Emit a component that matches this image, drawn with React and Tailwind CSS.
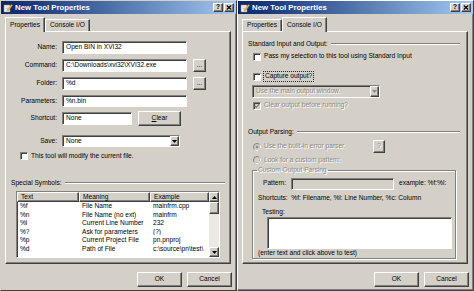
import React from 'react';

const raised =
  'border border-t-white border-l-white border-b-[#404040] border-r-[#404040] bg-[#d4d0c8] shadow-[inset_-1px_-1px_0_#808080]';
const sunken =
  'border border-t-[#808080] border-l-[#808080] border-b-white border-r-white shadow-[inset_1px_1px_0_#404040]';
const greyed = 'text-[#8d8a83] [text-shadow:1px_1px_0_#fff]';

// little notepad + pencil in the caption
const TitleIcon = () => (
  <svg width="10" height="10" viewBox="0 0 10 10" className="shrink-0">
    <rect x="1" y="2" width="6" height="7" fill="#fff" stroke="#7a7a7a" strokeWidth="0.6" />
    <path d="M2.3 4h3.4M2.3 5.5h3.4M2.3 7h2.2" stroke="#9a9a9a" strokeWidth="0.5" />
    <path d="M4 7.2 L8.4 1.4 L9.6 2.4 L5.1 8.1 Z" fill="#f3c22e" stroke="#9c7415" strokeWidth="0.4" />
  </svg>
);

const CaptionButton = ({ children }) => (
  <div className={`w-[10px] h-[9px] flex items-center justify-center ${raised}`}>{children}</div>
);

const TitleBar = () => (
  <div className="flex items-center h-[13px] bg-linear-to-r from-[#0a246a] to-[#a6caf0] px-[2px]">
    <TitleIcon />
    <span className="ml-[2px] text-white font-bold text-[7.8px] leading-none">New Tool Properties</span>
    <div className="ml-auto flex gap-[1px]">
      <CaptionButton>
        <span className="text-[6.5px] font-bold leading-none text-black">?</span>
      </CaptionButton>
      <CaptionButton>
        <svg width="6" height="5" viewBox="0 0 6 5">
          <path d="M0.8 0.5 L5.2 4.5 M5.2 0.5 L0.8 4.5" stroke="#000" strokeWidth="1.1" />
        </svg>
      </CaptionButton>
    </div>
  </div>
);

const Tabs = ({ active }) => (
  <div className="flex items-end h-[15px] mt-[2px] ml-[4px] relative z-10">
    {['Properties', 'Console I/O'].map((t) =>
      t === active ? (
        <div
          key={t}
          className="h-[15px] px-[4px] flex items-center bg-[#d4d0c8] border border-b-0 border-t-white border-l-white border-r-[#404040] shadow-[inset_-1px_0_0_#808080] -mb-[1px]"
        >
          {t}
        </div>
      ) : (
        <div
          key={t}
          className="h-[12px] px-[4px] flex items-center border border-b-0 border-t-white border-l-white border-r-[#404040] shadow-[inset_-1px_0_0_#808080]"
        >
          {t}
        </div>
      )
    )}
  </div>
);

const Field = ({ w, h = 13, children, disabled }) => (
  <div
    className={`${sunken} ${disabled ? 'bg-[#d4d0c8]' : 'bg-white'} flex items-center pl-[3px] overflow-hidden whitespace-nowrap`}
    style={{ width: w, height: h }}
  >
    {children}
  </div>
);

const DropArrow = ({ disabled }) => (
  <div className={`w-[9px] h-full flex items-center justify-center ${raised}`}>
    <svg width="5" height="3" viewBox="0 0 5 3">
      <path d="M0 0 H5 L2.5 3 Z" fill={disabled ? '#8d8a83' : '#000'} />
    </svg>
  </div>
);

const Check = ({ checked, disabled }) => (
  <div className={`w-[8px] h-[8px] shrink-0 ${sunken} ${disabled ? 'bg-[#d4d0c8]' : 'bg-white'} flex items-center justify-center`}>
    {checked && (
      <svg width="6" height="6" viewBox="0 0 6 6">
        <path d="M0.7 2.6 L2.3 4.3 L5.3 1" stroke={disabled ? '#808080' : '#000'} strokeWidth="1.2" fill="none" />
      </svg>
    )}
  </div>
);

const Radio = ({ checked }) => (
  <svg width="8" height="8" viewBox="0 0 8 8" className="shrink-0">
    <circle cx="4" cy="4" r="3.5" fill="#d4d0c8" stroke="#808080" strokeWidth="1" />
    <path d="M6.5 1.5 A3.5 3.5 0 0 1 1.5 6.5" stroke="#fff" strokeWidth="1" fill="none" />
    {checked && <circle cx="4" cy="4" r="1.3" fill="#8d8a83" />}
  </svg>
);

const GroupHeader = ({ label, className = '' }) => (
  <div className={`flex items-center h-[8px] ${className}`}>
    <span className="whitespace-nowrap">{label}</span>
    <div className="flex-1 ml-[3px] border-t border-t-[#808080] border-b border-b-white" />
  </div>
);

const Buttons = () => (
  <div className="flex justify-end gap-[5px] mt-[8px] mr-[4px]">
    <div className={`w-[45px] h-[15px] flex items-center justify-center ${raised}`}>OK</div>
    <div className={`w-[45px] h-[15px] flex items-center justify-center ${raised}`}>Cancel</div>
  </div>
);

const Panel = ({ children }) => (
  <div className="ml-[4px] w-[226px] h-[233px] border border-t-white border-l-white border-b-[#404040] border-r-[#404040] shadow-[inset_-1px_-1px_0_#808080] flex flex-col">
    {children}
  </div>
);

const Row = ({ label, mt, h = 13, children }) => (
  <div className="flex items-center" style={{ marginTop: mt, height: h }}>
    <span className="w-[51px] text-right">{label}</span>
    <div className="ml-[5px] flex items-center">{children}</div>
  </div>
);

const symbols = [
  ['%f', 'File Name', 'mainfrm.cpp'],
  ['%n', 'File Name (no ext)', 'mainfrm'],
  ['%l', 'Current Line Number', '232'],
  ['%?', 'Ask for parameters', '(?)'],
  ['%p', 'Current Project File', 'pn.pnproj'],
  ['%d', 'Path of File', 'c:\\source\\pn\\test\\'],
];

const SymbolList = () => (
  <div className={`ml-[10px] mt-[4px] w-[204px] h-[67px] bg-white flex ${sunken}`}>
    <div className="flex-1 flex flex-col overflow-hidden">
      <div className="flex h-[10px] shrink-0">
        <div className={`w-[62px] h-full pl-[3px] flex items-center ${raised}`}>Text</div>
        <div className={`w-[71px] h-full pl-[3px] flex items-center ${raised}`}>Meaning</div>
        <div className={`flex-1 h-full pl-[3px] flex items-center ${raised}`}>Example</div>
      </div>
      {symbols.map(([a, b, c]) => (
        <div key={a} className="flex h-[8.6px] items-center whitespace-nowrap">
          <span className="w-[62px] pl-[3px]">{a}</span>
          <span className="w-[71px] pl-[3px]">{b}</span>
          <span className="flex-1 pl-[3px] overflow-hidden">{c}</span>
        </div>
      ))}
    </div>
    <div className="w-[10px] flex flex-col bg-[#ece9e2]">
      <div className={`h-[10px] flex items-center justify-center ${raised}`}>
        <svg width="5" height="3" viewBox="0 0 5 3"><path d="M0 3 H5 L2.5 0 Z" fill="#000" /></svg>
      </div>
      <div className={`h-[12px] ${raised}`} />
      <div className="flex-1" />
      <div className={`h-[10px] flex items-center justify-center ${raised}`}>
        <svg width="5" height="3" viewBox="0 0 5 3"><path d="M0 0 H5 L2.5 3 Z" fill="#000" /></svg>
      </div>
    </div>
  </div>
);

const PropertiesWindow = () => (
  <div className="w-[237px] h-full border border-t-[#d4d0c8] border-l-[#d4d0c8] border-b-[#404040] border-r-[#404040] shadow-[inset_-1px_0_0_#808080] flex flex-col">
    <TitleBar />
    <Tabs active="Properties" />
    <Panel>
      <Row label="Name:" mt={9}>
        <Field w={125}>Open BIN in XVI32</Field>
      </Row>
      <Row label="Command:" mt={5}>
        <Field w={125}>C:\Downloads\xvi32\XVI32.exe</Field>
        <div className={`ml-[6px] w-[13px] h-[13px] flex items-center justify-center ${raised}`}>...</div>
      </Row>
      <Row label="Folder:" mt={5}>
        <Field w={125}>%d</Field>
        <div className={`ml-[6px] w-[13px] h-[13px] flex items-center justify-center ${raised}`}>...</div>
      </Row>
      <Row label="Parameters:" mt={5} h={12}>
        <Field w={125} h={12}>%n.bin</Field>
      </Row>
      <Row label="Shortcut:" mt={4} h={15}>
        <Field w={70}>None</Field>
        <div className={`ml-[6px] w-[43px] h-[15px] flex items-center justify-center ${raised}`}>
          <span className="underline">C</span>lear
        </div>
      </Row>
      <Row label="Save:" mt={9} h={12}>
        <div className={`w-[118px] h-[12px] bg-white flex items-center ${sunken}`}>
          <span className="flex-1 pl-[3px]">None</span>
          <DropArrow />
        </div>
      </Row>
      <div className="flex items-center h-[8px] mt-[5px] ml-[14px]">
        <Check />
        <span className="ml-[3px]">This tool will modify the current file.</span>
      </div>
      <GroupHeader label="Special Symbols:" className="mt-[19px] ml-[5px] mr-[5px]" />
      <SymbolList />
    </Panel>
    <Buttons />
  </div>
);

const ConsoleWindow = () => (
  <div className="w-[237px] h-full border border-t-white border-l-white border-b-[#404040] border-r-[#404040] shadow-[inset_-1px_-1px_0_#808080] flex flex-col">
    <TitleBar />
    <Tabs active="Console I/O" />
    <Panel>
      <GroupHeader label="Standard Input and Output:" className="mt-[8px] ml-[5px] mr-[7px]" />
      <div className="flex items-center h-[9px] mt-[4px] ml-[10px]">
        <Check />
        <span className="ml-[3px]">Pass my selection to this tool using Standard Input</span>
      </div>
      <div className="flex items-center h-[9px] mt-[11px] ml-[10px]">
        <Check />
        <span className="ml-[2px] px-[1px] py-[1px] border border-dotted border-[#222]">Capture output?</span>
      </div>
      <div className={`ml-[9px] mt-[4px] w-[128px] h-[13px] bg-[#d4d0c8] flex items-center ${sunken}`}>
        <span className={`flex-1 pl-[3px] ${greyed}`}>Use the main output window.</span>
        <DropArrow disabled />
      </div>
      <div className="flex items-center h-[9px] mt-[3px] ml-[10px]">
        <Check checked disabled />
        <span className={`ml-[3px] ${greyed}`}>Clear output before running?</span>
      </div>
      <GroupHeader label="Output Parsing:" className="mt-[18px] ml-[5px] mr-[7px]" />
      <div className="flex items-center h-[13px] mt-[4px] ml-[10px]">
        <Radio checked />
        <span className={`ml-[3px] w-[109px] ${greyed}`}>Use the built-in error parser.</span>
        <div className={`w-[12px] h-[13px] flex items-center justify-center ${raised}`}>
          <span className={greyed}>?</span>
        </div>
      </div>
      <div className="flex items-center h-[8px] mt-[3px] ml-[10px]">
        <Radio />
        <span className={`ml-[3px] ${greyed}`}>Look for a custom pattern:</span>
      </div>
      <fieldset className="ml-[9px] mt-[3px] w-[204px] h-[92px] border border-[#808080] shadow-[1px_1px_0_#fff,inset_1px_1px_0_#fff] flex flex-col">
        <legend className={`ml-[4px] px-[1px] leading-none ${greyed}`}>Custom Output Parsing</legend>
        <div className="flex items-center h-[12px] mt-[4px] ml-[10px]">
          <span className="w-[28px]">Pattern:</span>
          <div className={`w-[103px] h-[12px] bg-[#d4d0c8] ${sunken}`} />
          <span className="ml-[5px]">example: %f:%l:</span>
        </div>
        <div className="mt-[5px] ml-[5px] h-[8px] flex items-center">Shortcuts:&nbsp; %f: Filename, %l: Line Number, %c: Column</div>
        <div className="mt-[6px] ml-[9px] h-[8px] flex items-center">Testing:</div>
        <div className={`mt-[0px] ml-[14px] w-[185px] h-[32px] bg-white ${sunken}`} />
        <div className="mt-[1px] ml-[5px] h-[8px] flex items-center">(enter text and click above to test)</div>
      </fieldset>
    </Panel>
    <Buttons />
  </div>
);

export default function App() {
  return (
    <div className="w-[474px] h-[291px] flex bg-[#d4d0c8] text-black text-[6.6px] leading-none font-['Liberation_Sans',Arial,sans-serif] overflow-hidden">
      <PropertiesWindow />
      <ConsoleWindow />
    </div>
  );
}
